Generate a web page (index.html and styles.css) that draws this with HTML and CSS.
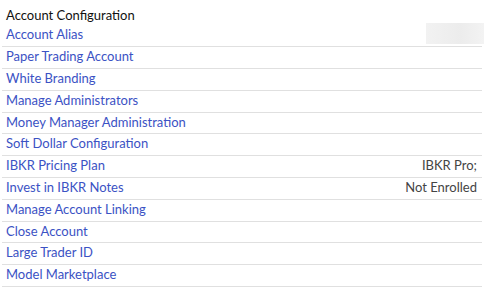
FILE: index.html
```html
<!DOCTYPE html>
<html lang="en">
  <head>
    <meta charset="UTF-8" />
    <title>Account Configuration</title>
    <link rel="stylesheet" href="styles.css">
  </head>
  <body>
    <div class="panel">
      <h2 class="panel-title">Account Configuration</h2>
      <ul class="config-list">
        <li class="config-row">
          <a href="#" class="config-link">Account Alias</a>
          <span class="alias-placeholder"></span>
        </li>
        <li class="config-row"><a href="#" class="config-link">Paper Trading Account</a></li>
        <li class="config-row"><a href="#" class="config-link">White Branding</a></li>
        <li class="config-row"><a href="#" class="config-link">Manage Administrators</a></li>
        <li class="config-row"><a href="#" class="config-link">Money Manager Administration</a></li>
        <li class="config-row"><a href="#" class="config-link">Soft Dollar Configuration</a></li>
        <li class="config-row">
          <a href="#" class="config-link">IBKR Pricing Plan</a>
          <span class="config-value">IBKR Pro;</span>
        </li>
        <li class="config-row">
          <a href="#" class="config-link">Invest in IBKR Notes</a>
          <span class="config-value">Not Enrolled</span>
        </li>
        <li class="config-row"><a href="#" class="config-link">Manage Account Linking</a></li>
        <li class="config-row"><a href="#" class="config-link">Close Account</a></li>
        <li class="config-row"><a href="#" class="config-link">Large Trader ID</a></li>
        <li class="config-row"><a href="#" class="config-link">Model Marketplace</a></li>
      </ul>
    </div>
  </body>
</html>
```

FILE: styles.css
```css
body {
  margin: 0;
  background-color: #fff;
  font-family: Lato, 'Open Sans', sans-serif;
  color: #222;
}
.panel {
  width: 480px;
  margin-left: 2px;
  padding-top: 4.5px;
}
.panel-title {
  margin: 0;
  padding: 0 4px;
  height: 21px;
  line-height: 21px;
  font-size: 13px;
  font-weight: normal;
  color: #111;
}
.config-list {
  list-style: none;
  margin: 0;
  padding: 0;
}
.config-row {
  display: flex;
  justify-content: space-between;
  align-items: center;
  box-sizing: border-box;
  height: 21.8px;
  padding: 0 5px 3px 4px;
  border-bottom: 1px solid #e0e0e0;
  font-size: 13px;
}
.config-link {
  color: #3b52c4;
  text-decoration: none;
}
.config-value {
  color: #444;
}
.alias-placeholder {
  align-self: flex-start;
  width: 58px;
  height: 21px;
  margin-top: -2.5px;
  margin-right: -7px;
  background: linear-gradient(90deg, #f2f2f2, #ececec 60%, #f3f3f3);
}
```
